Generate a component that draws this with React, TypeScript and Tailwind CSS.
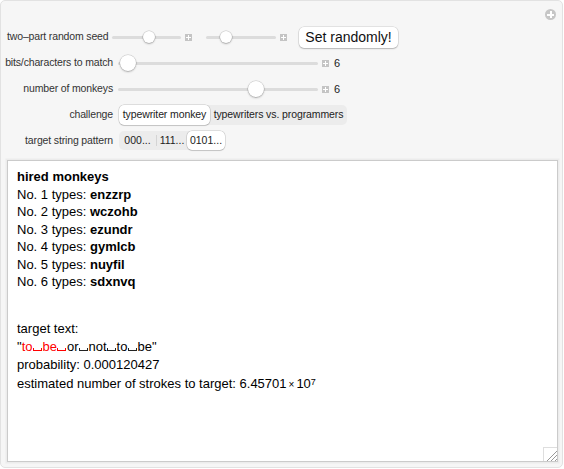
import React from "react";

const lab = "text-[10.5px] tracking-[-0.15px] text-[#333] whitespace-nowrap";

function Plus() {
  return (
    <div className="w-[7px] h-[7px] bg-[#c4c4c4] relative flex-none">
      <div className="absolute left-[3px] top-[1px] w-[1px] h-[5px] bg-white" />
      <div className="absolute left-[1px] top-[3px] w-[5px] h-[1px] bg-white" />
    </div>
  );
}

function Slider({ w, pos, size }: { w: number; pos: number; size: number }) {
  return (
    <div className="relative h-[18px] flex items-center flex-none" style={{ width: w }}>
      <div className="w-full h-[3px] rounded-full bg-[#dcdcdc]" />
      <div
        className="absolute rounded-full bg-white shadow-[0_0_0_0.5px_rgba(0,0,0,0.18),0_1px_2px_rgba(0,0,0,0.25)]"
        style={{ width: size, height: size, left: pos - size / 2, top: 9 - size / 2 }}
      />
    </div>
  );
}

function Sp({ red }: { red?: boolean }) {
  return (
    <span
      className={
        "inline-block w-[9px] h-[3px] border-b border-l border-r mx-[0.5px] align-baseline " +
        (red ? "border-[#ff0000]" : "border-[#222]")
      }
    />
  );
}

export default function App() {
  return (
    <div
      className="w-[564px] h-[469px] bg-white"
      style={{ fontFamily: "'Liberation Sans', Arial, sans-serif" }}
    >
      <div className="w-[563px] h-[468px] rounded-[5px] border border-[#e2e2e2] bg-[#f6f6f6] relative flex flex-col">
        <div className="absolute right-[6px] top-[8px] w-[11px] h-[11px] rounded-full bg-[#c6c6c6] flex items-center justify-center">
          <div className="relative w-[7px] h-[7px]">
            <div className="absolute left-[3px] top-0 w-[1.5px] h-[7px] bg-white" />
            <div className="absolute top-[3px] left-0 h-[1.5px] w-[7px] bg-white" />
          </div>
        </div>
        {/* Row 1 */}
        <div className="flex items-center h-[22px] mt-[25px] pl-[6px]">
          <span className={lab + " w-[100px]"}>two–part random seed</span>
          <div className="ml-[5px]"><Slider w={69} pos={37} size={12} /></div>
          <div className="ml-[4px]"><Plus /></div>
          <div className="ml-[14px]"><Slider w={70} pos={20} size={12} /></div>
          <div className="ml-[4px]"><Plus /></div>
          <button className="ml-[12px] h-[21px] w-[99px] rounded-[5px] bg-white text-[14px] text-[#111] shadow-[0_0_0_0.5px_rgba(0,0,0,0.15),0_1px_1.5px_rgba(0,0,0,0.2)] leading-none whitespace-nowrap">
            Set randomly!
          </button>
        </div>
        {/* Row 2 */}
        <div className="flex items-center h-[18px] mt-[6px]">
          <span className={lab + " w-[112px] text-right"}>bits/characters to match</span>
          <div className="ml-[5px]"><Slider w={200} pos={10} size={16} /></div>
          <div className="ml-[4px]"><Plus /></div>
          <span className="ml-[5px] text-[11px] text-[#222]">6</span>
        </div>
        {/* Row 3 */}
        <div className="flex items-center h-[18px] mt-[8px]">
          <span className={lab + " w-[112px] text-right"}>number of monkeys</span>
          <div className="ml-[5px]"><Slider w={200} pos={138} size={16} /></div>
          <div className="ml-[4px]"><Plus /></div>
          <span className="ml-[5px] text-[11px] text-[#222]">6</span>
        </div>
        {/* Row 4 */}
        <div className="flex items-center h-[20px] mt-[7px]">
          <span className={lab + " w-[112px] text-right"}>challenge</span>
          <div className="ml-[6px] flex items-center h-[20px] rounded-[5px] bg-[#ececec] text-[10.5px] tracking-[-0.1px] text-[#222] whitespace-nowrap">
            <div className="h-[20px] w-[91px] flex items-center justify-center rounded-[5px] bg-white shadow-[0_0_0_0.5px_rgba(0,0,0,0.2),0_1px_1px_rgba(0,0,0,0.12)]">
              typewriter monkey
            </div>
            <div className="h-[20px] w-[137px] flex items-center justify-center">typewriters vs. programmers</div>
          </div>
        </div>
        {/* Row 5 */}
        <div className="flex items-center h-[19px] mt-[6px]">
          <span className={lab + " w-[112px] text-right"}>target string pattern</span>
          <div className="ml-[6px] flex items-center h-[19px] rounded-[5px] bg-[#ececec] text-[10.5px] text-[#222] whitespace-nowrap">
            <div className="h-[19px] w-[37px] flex items-center justify-center">000...</div>
            <div className="w-[1px] h-[11px] bg-[#d4d4d4]" />
            <div className="h-[19px] w-[30px] flex items-center justify-center">111...</div>
            <div className="h-[19px] w-[38px] flex items-center justify-center rounded-[5px] bg-white shadow-[0_0_0_0.5px_rgba(0,0,0,0.2),0_1px_1px_rgba(0,0,0,0.12)]">
              0101...
            </div>
          </div>
        </div>
        {/* Output */}
        <div className="mt-[10px] ml-[6px] w-[551px] h-[302px] bg-white border border-[#cbcbcb] shadow-[0_0_0_1.5px_#ececec] relative">
          <div className="pt-[7px] pl-[9px] text-[13px] leading-[17.5px] text-black">
            <div className="font-bold">hired monkeys</div>
            <div>No. 1 types: <b>enzzrp</b></div>
            <div>No. 2 types: <b>wczohb</b></div>
            <div>No. 3 types: <b>ezundr</b></div>
            <div>No. 4 types: <b>gymlcb</b></div>
            <div>No. 5 types: <b>nuyfil</b></div>
            <div>No. 6 types: <b>sdxnvq</b></div>
            <div className="h-[29.5px]" />
            <div className="leading-[18px]">target text:</div>
            <div className="leading-[18px]">
              "<span className="text-[#ff0000]">to</span>
              <Sp red />
              <span className="text-[#ff0000]">be</span>
              <Sp red />
              or
              <Sp />
              not
              <Sp />
              to
              <Sp />
              be"
            </div>
            <div className="leading-[18px]">probability: 0.000120427</div>
            <div className="leading-[18px] mt-[1px]">
              estimated number of strokes to target: 6.45701<span className="text-[10px] mx-[2px]">×</span>10<sup className="text-[9px] relative top-[-3px]">7</sup>
            </div>
          </div>
          <div className="absolute right-0 bottom-0 w-[14px] h-[14px] border-l border-t border-[#dedede] bg-white overflow-hidden">
            <svg width="14" height="14" viewBox="0 0 14 14">
              <line x1="3" y1="13" x2="13" y2="3" stroke="#999" strokeWidth="1" />
              <line x1="7" y1="13" x2="13" y2="7" stroke="#999" strokeWidth="1" />
              <line x1="11" y1="13" x2="13" y2="11" stroke="#999" strokeWidth="1" />
            </svg>
          </div>
        </div>
      </div>
    </div>
  );
}
